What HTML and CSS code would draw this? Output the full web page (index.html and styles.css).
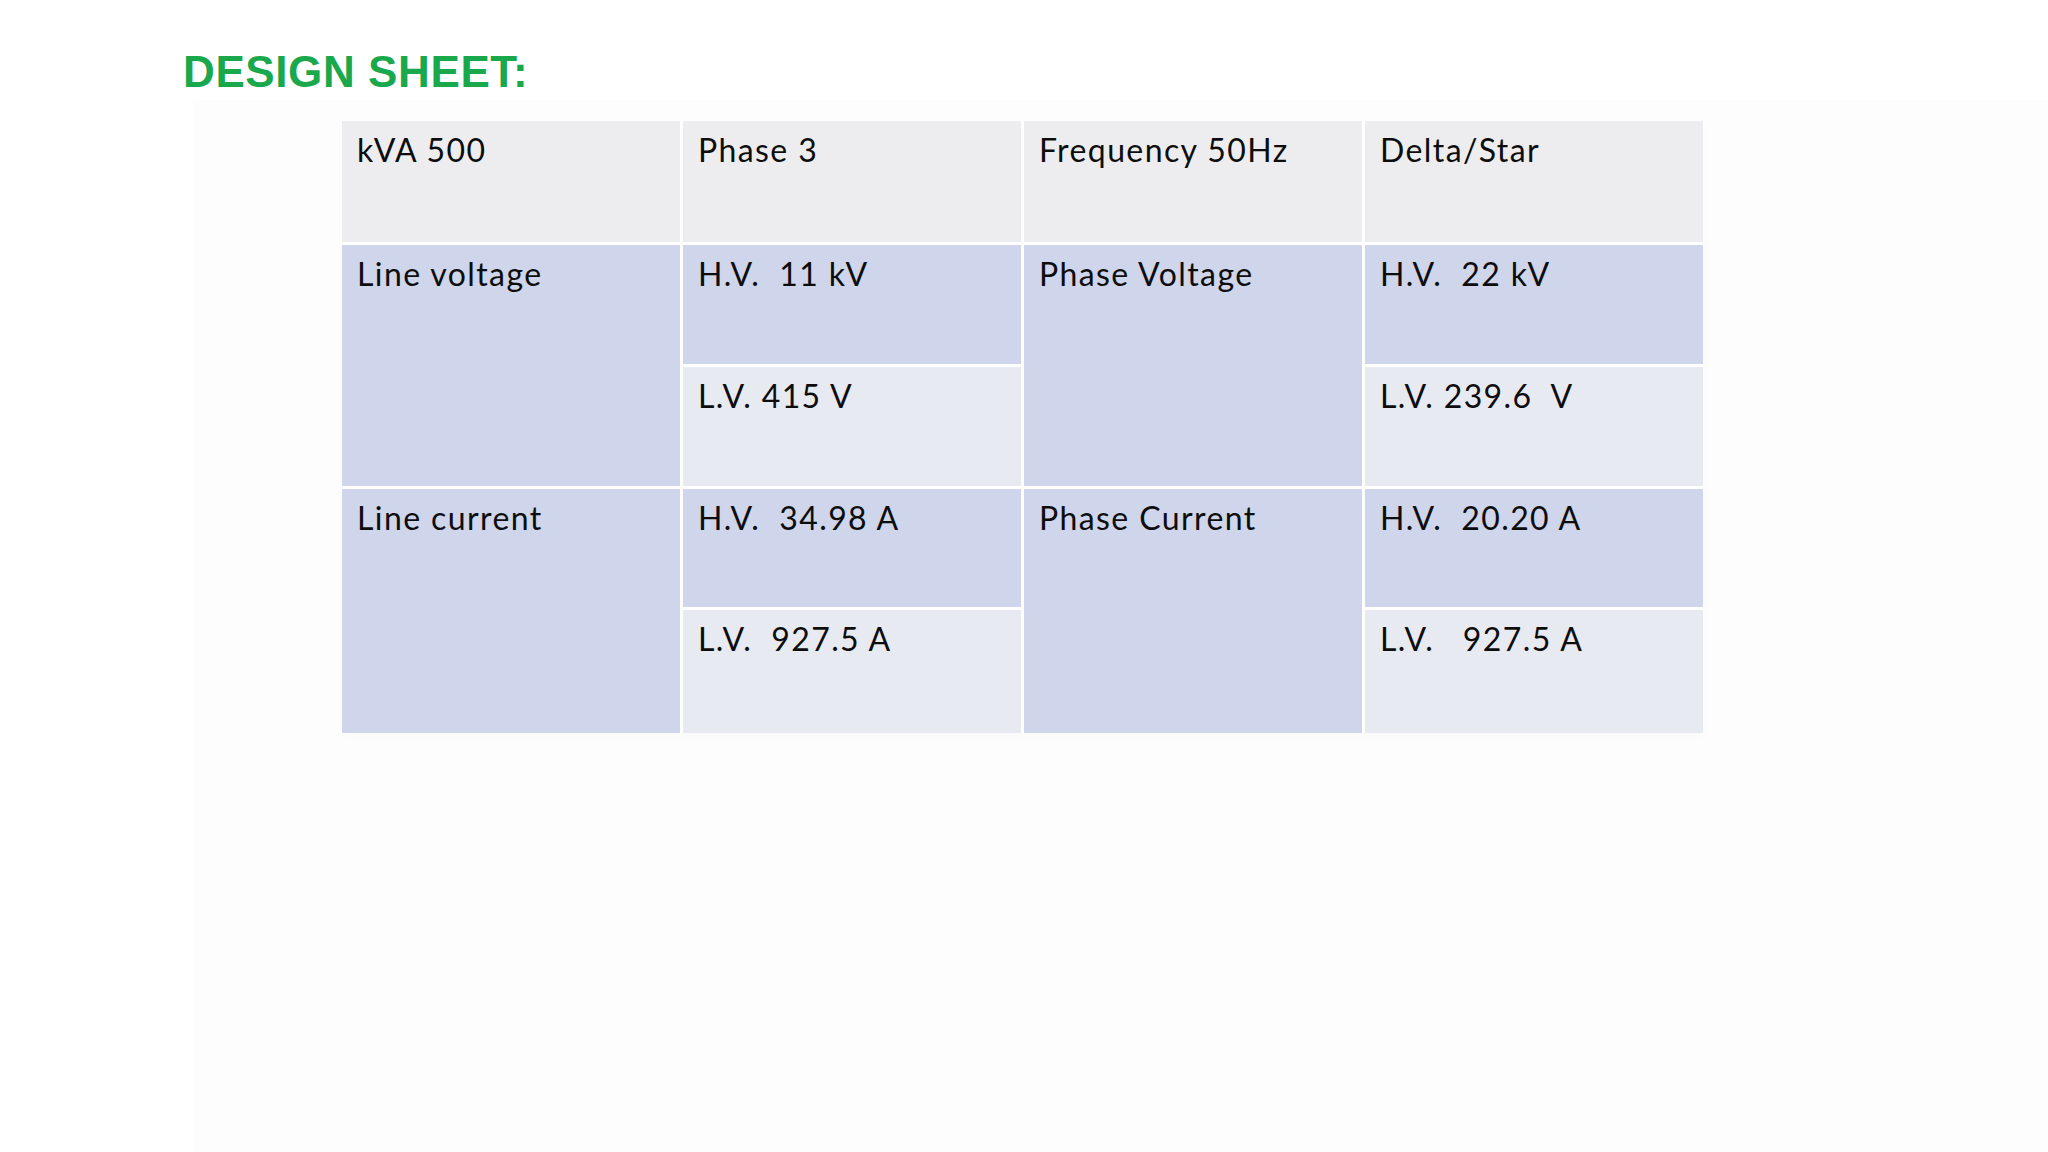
FILE: index.html
```html
<!DOCTYPE html>
<html lang="en">
<head>
<meta charset="utf-8">
<title>Design Sheet</title>
<link rel="stylesheet" href="styles.css">
</head>
<body>
<div class="page">
  <h1 class="title">DESIGN SHEET:</h1>
  <div class="panel">
    <div class="sheet">
      <div class="cell head">kVA 500</div>
      <div class="cell head">Phase 3</div>
      <div class="cell head">Frequency 50Hz</div>
      <div class="cell head">Delta/Star</div>

      <div class="cell dark span2">Line voltage</div>
      <div class="cell dark">H.V.  11 kV</div>
      <div class="cell dark span2">Phase Voltage</div>
      <div class="cell dark">H.V.  22 kV</div>
      <div class="cell light">L.V. 415 V</div>
      <div class="cell light">L.V. 239.6  V</div>

      <div class="cell dark span2">Line current</div>
      <div class="cell dark">H.V.  34.98 A</div>
      <div class="cell dark span2">Phase Current</div>
      <div class="cell dark">H.V.  20.20 A</div>
      <div class="cell light">L.V.  927.5 A</div>
      <div class="cell light">L.V.   927.5 A</div>
    </div>
  </div>
</div>
</body>
</html>
```
FILE: styles.css
```css
html, body {
  margin: 0;
  padding: 0;
  background: #ffffff;
}

.page {
  width: 2048px;
  height: 1152px;
  display: flex;
  flex-direction: column;
  overflow: hidden;
}

.title {
  margin: 0;
  padding: 47px 0 0 183px;
  height: 50px;
  font-family: "Liberation Sans", Arial, sans-serif;
  font-weight: bold;
  font-size: 44px;
  line-height: 50px;
  color: #19a84c;
  letter-spacing: 0.6px;
}

.panel {
  flex: 1;
  margin-left: 193px;
  margin-top: 3px;
  padding: 21px 0 0 149px;
  background: #fdfdfd;
}

.sheet {
  display: grid;
  grid-template-columns: repeat(4, 338px);
  grid-template-rows: 121px 119px 119px 118px 123px;
  gap: 3px;
  width: max-content;
  background: #ffffff;
  box-shadow: 0 6px 14px rgba(0, 0, 0, 0.015);
}

.cell {
  padding: 9px 0 0 15px;
  font-family: Lato, "Open Sans", sans-serif;
  font-size: 32px;
  line-height: 40px;
  color: #0d0d0d;
  white-space: pre;
  letter-spacing: 1.4px;
}

.span2 {
  grid-row: span 2;
}

.head {
  background: #ededef;
}

.dark {
  background: #cfd5ea;
}

.light {
  background: #e8eaf2;
}
```
